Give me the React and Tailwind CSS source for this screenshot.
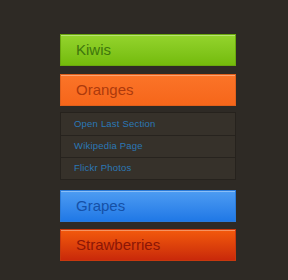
import React from "react";

const subLinks = ["Open Last Section", "Wikipedia Page", "Flickr Photos"];

const Bar = ({ label, className }) => (
  <div
    className={`h-[32px] flex items-center pl-[15px] border text-[15px] shadow-[inset_0_1px_0_rgba(255,255,255,0.35)] ${className}`}
  >
    {label}
  </div>
);

const App = () => {
  return (
    <div
      className="w-[288px] h-[280px] bg-[#2e2a25] pt-[34px] pl-[60px]"
      style={{ fontFamily: '"Liberation Sans", Arial, sans-serif' }}
    >
      <div className="w-[176px] flex flex-col">
        <Bar
          label="Kiwis"
          className="bg-gradient-to-b from-[#94d42c] to-[#74bb0a] border-[#6aa80e] text-[#3e760c]"
        />
        <Bar
          label="Oranges"
          className="mt-[8px] bg-gradient-to-b from-[#fb7428] to-[#f6661a] border-[#e0601c] text-[#ad3a0c]"
        />

        <div className="mt-[6px] border border-[#26221d]">
          {subLinks.map((link, i) => (
            <div
              key={link}
              className={`h-[22px] flex items-center pl-[13px] bg-[#36312a] text-[9.5px] tracking-[0.2px] text-[#2b78b6] ${
                i > 0 ? "border-t border-[#27231e]" : ""
              }`}
            >
              {link}
            </div>
          ))}
        </div>

        <Bar
          label="Grapes"
          className="mt-[10px] bg-gradient-to-b from-[#4d9cf2] to-[#1f78e6] border-[#2a7ad8] text-[#1550a6]"
        />
        <Bar
          label="Strawberries"
          className="mt-[7px] bg-gradient-to-b from-[#f3590c] to-[#c9280a] border-[#c8380e] text-[#8c1606]"
        />
      </div>
    </div>
  );
};

export default App;
